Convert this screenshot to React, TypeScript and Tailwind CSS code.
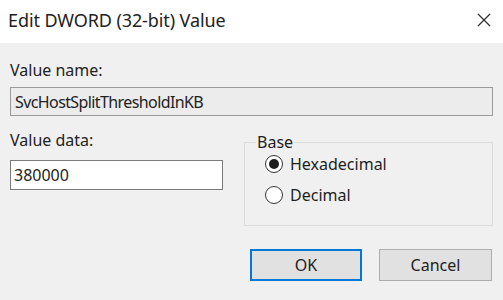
import React from "react";

const font = { fontFamily: '"Noto Sans", "Open Sans", Arial, sans-serif' };

function Radio({ checked, label }: { checked?: boolean; label: string }) {
  return (
    <label className="flex items-center gap-[7px] h-[20px]">
      <span className="w-[18px] h-[18px] rounded-full border border-[#333] bg-white flex items-center justify-center">
        {checked && <span className="w-[10px] h-[10px] rounded-full bg-[#1e1e1e]" />}
      </span>
      <span className="text-[16px] text-[#1e1e1e] leading-[20px]">{label}</span>
    </label>
  );
}

export default function App() {
  return (
    <div className="w-[503px] h-[300px] bg-[#f0f0f0] flex flex-col overflow-hidden" style={font}>
      <div className="h-[43px] bg-white flex items-center justify-between pl-[8px] pr-[11px]">
        <span className="text-[18px] text-[#222] tracking-[-0.1px] mt-[-3px]">Edit DWORD (32-bit) Value</span>
        <svg width="16" height="16" viewBox="0 0 16 16" className="mt-[-4px]">
          <path d="M2 2 L14 14 M14 2 L2 14" stroke="#333" strokeWidth="1.3" />
        </svg>
      </div>
      <div className="flex flex-col pl-[10px] pr-[10px] pt-[17px]">
        <div className="text-[16px] leading-[20px] text-[#222]">Value name:</div>
        <div className="mt-[7px] h-[29px] w-[483px] border border-[#9a9a9a] bg-[#ececec] flex items-center px-[4px] text-[16px] text-[#222] tracking-[-0.6px]">
          SvcHostSplitThresholdInKB
        </div>
        <div className="flex gap-[21px] mt-[14px]">
          <div className="flex flex-col w-[213px]">
            <div className="text-[16px] leading-[20px] text-[#222]">Value data:</div>
            <div className="mt-[10px] h-[30px] border border-[#7a7a7a] bg-white flex items-center px-[3px] text-[16px] text-[#222]">
              380000
            </div>
          </div>
          <fieldset className="mt-[2px] w-[249px] h-[94px] border border-[#dcdcdc]">
            <legend className="ml-[11px] px-[1px] text-[16px] leading-[20px] text-[#222]">Base</legend>
            <div className="flex flex-col gap-[11px] pl-[20px] pt-[2px]">
              <Radio checked label="Hexadecimal" />
              <Radio label="Decimal" />
            </div>
          </fieldset>
        </div>
        <div className="flex justify-end gap-[17px] mt-[23px] pr-[1px]">
          <button className="w-[112px] h-[32px] bg-[#e1e1e1] border-2 border-[#0078d7] text-[16px] text-[#222]">OK</button>
          <button className="w-[113px] h-[32px] bg-[#e1e1e1] border border-[#adadad] text-[16px] text-[#222]">Cancel</button>
        </div>
      </div>
    </div>
  );
}
